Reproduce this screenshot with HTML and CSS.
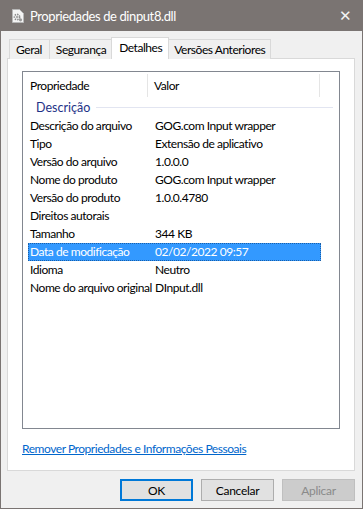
FILE: index.html
```html
<!DOCTYPE html>
<html lang="pt-BR">
<head>
  <meta charset="UTF-8" />
  <title>Propriedades de dinput8.dll</title>
  <link rel="stylesheet" href="styles.css">
</head>
<body>

  <div class="window">
    <div class="titlebar">
      <svg class="app-icon" width="12" height="14" viewBox="0 0 12 14">
        <path d="M0.5 0.5h7l4 4v9h-11z" fill="#f4f4f4" stroke="#b8b8b8"/>
        <circle cx="5" cy="8" r="2.6" fill="none" stroke="#8a8a8a" stroke-width="1.6" stroke-dasharray="1.4 1"/>
        <circle cx="5" cy="8" r="0.9" fill="#8a8a8a"/>
        <circle cx="8.5" cy="10.8" r="1.6" fill="#9a9a9a"/>
      </svg>
      <span class="title">Propriedades de dinput8.dll</span>
      <span class="close">&#x2715;</span>
    </div>

    <div class="dialog">
      <div class="tabs">
        <div class="tab">Geral</div>
        <div class="tab">Segurança</div>
        <div class="tab active">Detalhes</div>
        <div class="tab">Versões Anteriores</div>
      </div>

      <div class="panel">
        <div class="listbox">
          <div class="list-head">
            <span class="col-prop">Propriedade</span>
            <span class="col-val">Valor</span>
            <span class="col-end"></span>
          </div>

          <div class="group">
            <span>Descrição</span>
            <i></i>
          </div>

          <div class="row"><span>Descrição do arquivo</span><span>GOG.com Input wrapper</span></div>
          <div class="row"><span>Tipo</span><span>Extensão de aplicativo</span></div>
          <div class="row"><span>Versão do arquivo</span><span>1.0.0.0</span></div>
          <div class="row"><span>Nome do produto</span><span>GOG.com Input wrapper</span></div>
          <div class="row"><span>Versão do produto</span><span>1.0.0.4780</span></div>
          <div class="row"><span>Direitos autorais</span><span></span></div>
          <div class="row"><span>Tamanho</span><span>344 KB</span></div>
          <div class="row selected"><span>Data de modificação</span><span>02/02/2022 09:57</span></div>
          <div class="row"><span>Idioma</span><span>Neutro</span></div>
          <div class="row"><span>Nome do arquivo original</span><span>DInput.dll</span></div>
        </div>

        <a class="remove-link" href="#">Remover Propriedades e Informações Pessoais</a>
      </div>

      <div class="buttons">
        <button class="btn default">OK</button>
        <button class="btn">Cancelar</button>
        <button class="btn" disabled>Aplicar</button>
      </div>
    </div>
  </div>

</body>
</html>
```

FILE: styles.css
```css
* {
  box-sizing: border-box;
}

body {
  margin: 0;
  font-family: Lato, "Liberation Sans", sans-serif;
  font-size: 12px;
  letter-spacing: -0.45px;
  color: #000;
  background: #fff;
}

.window {
  width: 363px;
  height: 509px;
  border: 1px solid #7a7472;
  border-top: none;
  background: #f0f0f0;
  display: flex;
  flex-direction: column;
}

.titlebar {
  height: 31px;
  margin: 0 -1px;
  background: #7a7472;
  display: flex;
  align-items: center;
  padding-left: 12px;
  color: #fff;
}

.app-icon {
  flex: none;
}

.title {
  margin-left: 6px;
  font-size: 13px;
  letter-spacing: -0.4px;
  flex: 1;
}

.close {
  width: 32px;
  text-align: center;
  font-size: 15px;
  margin-right: 2px;
  color: #f2f2f2;
}

.dialog {
  flex: 1;
  padding: 6px 7px 0 6px;
  display: flex;
  flex-direction: column;
}

.tabs {
  display: flex;
  align-items: flex-end;
  padding-left: 2px;
  height: 22px;
  position: relative;
  z-index: 1;
}

.tab {
  height: 20px;
  padding: 0 6px;
  border: 1px solid #d9d9d9;
  border-bottom: none;
  margin-right: -1px;
  background: #f0f0f0;
  line-height: 20px;
  white-space: nowrap;
}

.tab:first-child {
  padding: 0 7px 0 6px;
}

.tab.active {
  height: 22px;
  background: #fff;
  line-height: 19px;
  padding: 0 6px 0 7px;
  margin: 0 -1px 0 -1px;
  position: relative;
  z-index: 2;
}

.tab.active + .tab {
  margin-left: 0;
  padding: 0 5px;
}

.panel {
  height: 413px;
  margin-top: -1px;
  border: 1px solid #d9d9d9;
  background: #fff;
  padding: 12px 14px 0 14px;
}

.listbox {
  width: 318px;
  height: 358px;
  border: 1px solid #828790;
  padding: 1px 0 0 5px;
}

.list-head {
  display: flex;
  height: 24px;
  align-items: center;
}

.list-head span {
  height: 23px;
  line-height: 23px;
  padding-left: 2px;
}

.col-prop {
  width: 120px;
  border-right: 1px solid #e5e5e5;
}

.col-val {
  width: 172px;
  padding-left: 6px !important;
  border-right: 1px solid #e5e5e5;
}

.group {
  display: flex;
  align-items: center;
  height: 20px;
  padding-left: 8px;
  color: #1e3287;
  font-size: 12.5px;
  letter-spacing: 0;
}

.group i {
  flex: none;
  width: 237px;
  height: 1px;
  margin-left: 6px;
  background: #e2e5f1;
}

.row {
  display: flex;
  width: 293px;
  height: 18px;
  line-height: 18px;
  padding-left: 2px;
  white-space: nowrap;
}

.row span:first-child {
  width: 125px;
}

.row.selected {
  background: #3399ff;
  color: #fff;
  outline: 1px dotted #1a5fa8;
  outline-offset: -1px;
}

.remove-link {
  display: inline-block;
  margin-top: 12px;
  color: #0066cc;
  text-decoration: underline;
}

.buttons {
  display: flex;
  justify-content: flex-end;
  gap: 8px;
  margin-top: 8px;
}

.btn {
  width: 73px;
  height: 22px;
  font-family: inherit;
  font-size: 12px;
  letter-spacing: -0.3px;
  background: #e1e1e1;
  border: 1px solid #adadad;
  color: #000;
  padding: 0;
}

.btn.default {
  border: 2px solid #0078d7;
}

.btn:disabled {
  background: #cccccc;
  border-color: #bfbfbf;
  color: #8a8a8a;
}
```
